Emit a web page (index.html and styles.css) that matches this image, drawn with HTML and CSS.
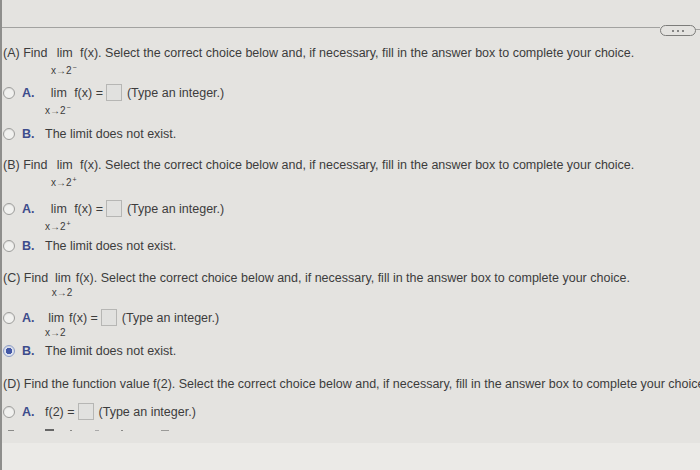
FILE: index.html
```html
<!DOCTYPE html>
<html>
<head>
<meta charset="utf-8">
<link rel="stylesheet" href="styles.css">
</head>
<body>
<div class="page">
  <div class="topbar"><div class="rule"></div><div class="more"><i></i><i></i><i></i></div><div class="tail"></div></div>

  <section class="part part-a">
    <div class="row q">(A) Find <span class="lim"><span class="lw">lim</span><span class="sub">x→2<span class="sgn">−</span></span></span> f(x). Select the correct choice below and, if necessary, fill in the answer box to complete your choice.</div>
    <div class="row opt-lim"><span class="radio"></span><span class="lbl">A.</span><span class="lim"><span class="lw">lim</span><span class="sub">x→2<span class="sgn">−</span></span></span> f(x) =<span class="box"></span>(Type an integer.)</div>
    <div class="row opt"><span class="radio"></span><span class="lbl">B.</span>The limit does not exist.</div>
  </section>

  <section class="part part-b">
    <div class="row q">(B) Find <span class="lim"><span class="lw">lim</span><span class="sub">x→2<span class="sgn">+</span></span></span> f(x). Select the correct choice below and, if necessary, fill in the answer box to complete your choice.</div>
    <div class="row opt-lim"><span class="radio"></span><span class="lbl">A.</span><span class="lim"><span class="lw">lim</span><span class="sub">x→2<span class="sgn">+</span></span></span> f(x) =<span class="box"></span>(Type an integer.)</div>
    <div class="row opt"><span class="radio"></span><span class="lbl">B.</span>The limit does not exist.</div>
  </section>

  <section class="part part-c">
    <div class="row q">(C) Find <span class="lim"><span class="lw">lim</span><span class="sub">x→2</span></span> f(x). Select the correct choice below and, if necessary, fill in the answer box to complete your choice.</div>
    <div class="row opt-lim"><span class="radio"></span><span class="lbl">A.</span><span class="lim"><span class="lw">lim</span><span class="sub">x→2</span></span> f(x) =<span class="box"></span>(Type an integer.)</div>
    <div class="row opt"><span class="radio checked"></span><span class="lbl">B.</span>The limit does not exist.</div>
  </section>

  <section class="part part-d">
    <div class="row q">(D) Find the function value f(2). Select the correct choice below and, if necessary, fill in the answer box to complete your choice.</div>
    <div class="row opt"><span class="radio"></span><span class="lbl">A.</span>f(2) =<span class="box"></span>(Type an integer.)</div>
  </section>

  <div class="dashes"><i class="d1"></i><i class="d2"></i><i class="d3"></i><i class="d4"></i><i class="d5"></i><i class="d6"></i></div>
  <div class="band"></div>
</div>
</body>
</html>
```

FILE: styles.css
```css
* { box-sizing: border-box; margin: 0; padding: 0; }
body {
  background: #e4e3e0;
  font-family: "Liberation Sans", Arial, sans-serif;
  font-size: 12.5px;
  color: #3c3c3c;
  overflow: hidden;
}
.page {
  height: 470px;
  border-left: 2px solid #8e8e8c;
  display: flex;
  flex-direction: column;
}
.topbar {
  height: 45px;
  flex: none;
  display: flex;
  align-items: flex-start;
  padding-top: 25px;
}
.topbar .rule {
  flex: 1;
  border-top: 1px solid #a2a2a0;
  margin-top: 2px;
}
.topbar .tail {
  width: 4px;
  border-top: 1px solid #a2a2a0;
  margin-top: 4px;
}
.more {
  width: 36px;
  height: 11px;
  border: 1px solid #7c7c7a;
  border-radius: 6px;
  display: flex;
  gap: 3px;
  justify-content: center;
  align-items: center;
}
.more i {
  width: 2px;
  height: 2px;
  border-radius: 50%;
  background: #666;
}
.part { flex: none; }
.row {
  white-space: nowrap;
  line-height: 16px;
  padding-left: 1px;
}
.q { height: 40px; }
.opt-lim { height: 41px; }
.opt { height: 31px; }
.part-b .q { height: 44px; }
.part-b .opt-lim { height: 37px; }
.part-b .opt { height: 32px; }
.part-c .opt-lim { height: 33px; }
.part-c .opt { height: 33px; }
.part-d .q { height: 28px; }
.part-d .opt { height: 21px; }

.lim {
  display: inline-flex;
  flex-direction: column;
  align-items: center;
  vertical-align: baseline;
  margin: 0;
}
.lim .lw { padding-left: 2px; }
.lim .sub {
  font-size: 10px;
  line-height: 10px;
  margin-top: 2px;
}
.lim .sgn {
  font-size: 7px;
  vertical-align: 4px;
  margin-left: 1px;
}
.radio {
  display: inline-block;
  width: 12px;
  height: 12px;
  border-radius: 50%;
  border: 1px solid #9c9c9a;
  background: #f1f1ef;
  vertical-align: -2px;
  margin: 0 7px 0 0;
  box-shadow: inset 0 1px 1px rgba(0,0,0,0.08);
}
.radio.checked {
  border-color: #8c9cc6;
  background: radial-gradient(circle, #4458a6 0 3px, #dfe4f0 3.5px);
}
.lbl {
  display: inline-block;
  width: 23px;
  font-weight: bold;
  color: #3d4c8c;
}
.box {
  display: inline-block;
  width: 16px;
  height: 17px;
  background: #e1e1df;
  border: 1px solid #b6b6b4;
  vertical-align: middle;
  margin: -2px 5px 0 3px;
}
.dashes {
  height: 18px;
  flex: none;
  display: flex;
  align-items: flex-start;
  padding-top: 5px;
}
.dashes i { display: block; height: 1px; background: #8a8a88; }
.dashes .d1 { width: 6px; margin-left: 6px; }
.dashes .d2 { width: 9px; height: 2px; margin-left: 31px; margin-top: -1px; background: #666; }
.dashes .d3 { width: 2px; margin-left: 16px; }
.dashes .d4 { width: 4px; margin-left: 23px; background: #aaa; }
.dashes .d5 { width: 2px; margin-left: 22px; }
.dashes .d6 { width: 8px; margin-left: 38px; background: #9a9a98; }
.band {
  flex: 1;
  background: #ebeae7;
}
```
